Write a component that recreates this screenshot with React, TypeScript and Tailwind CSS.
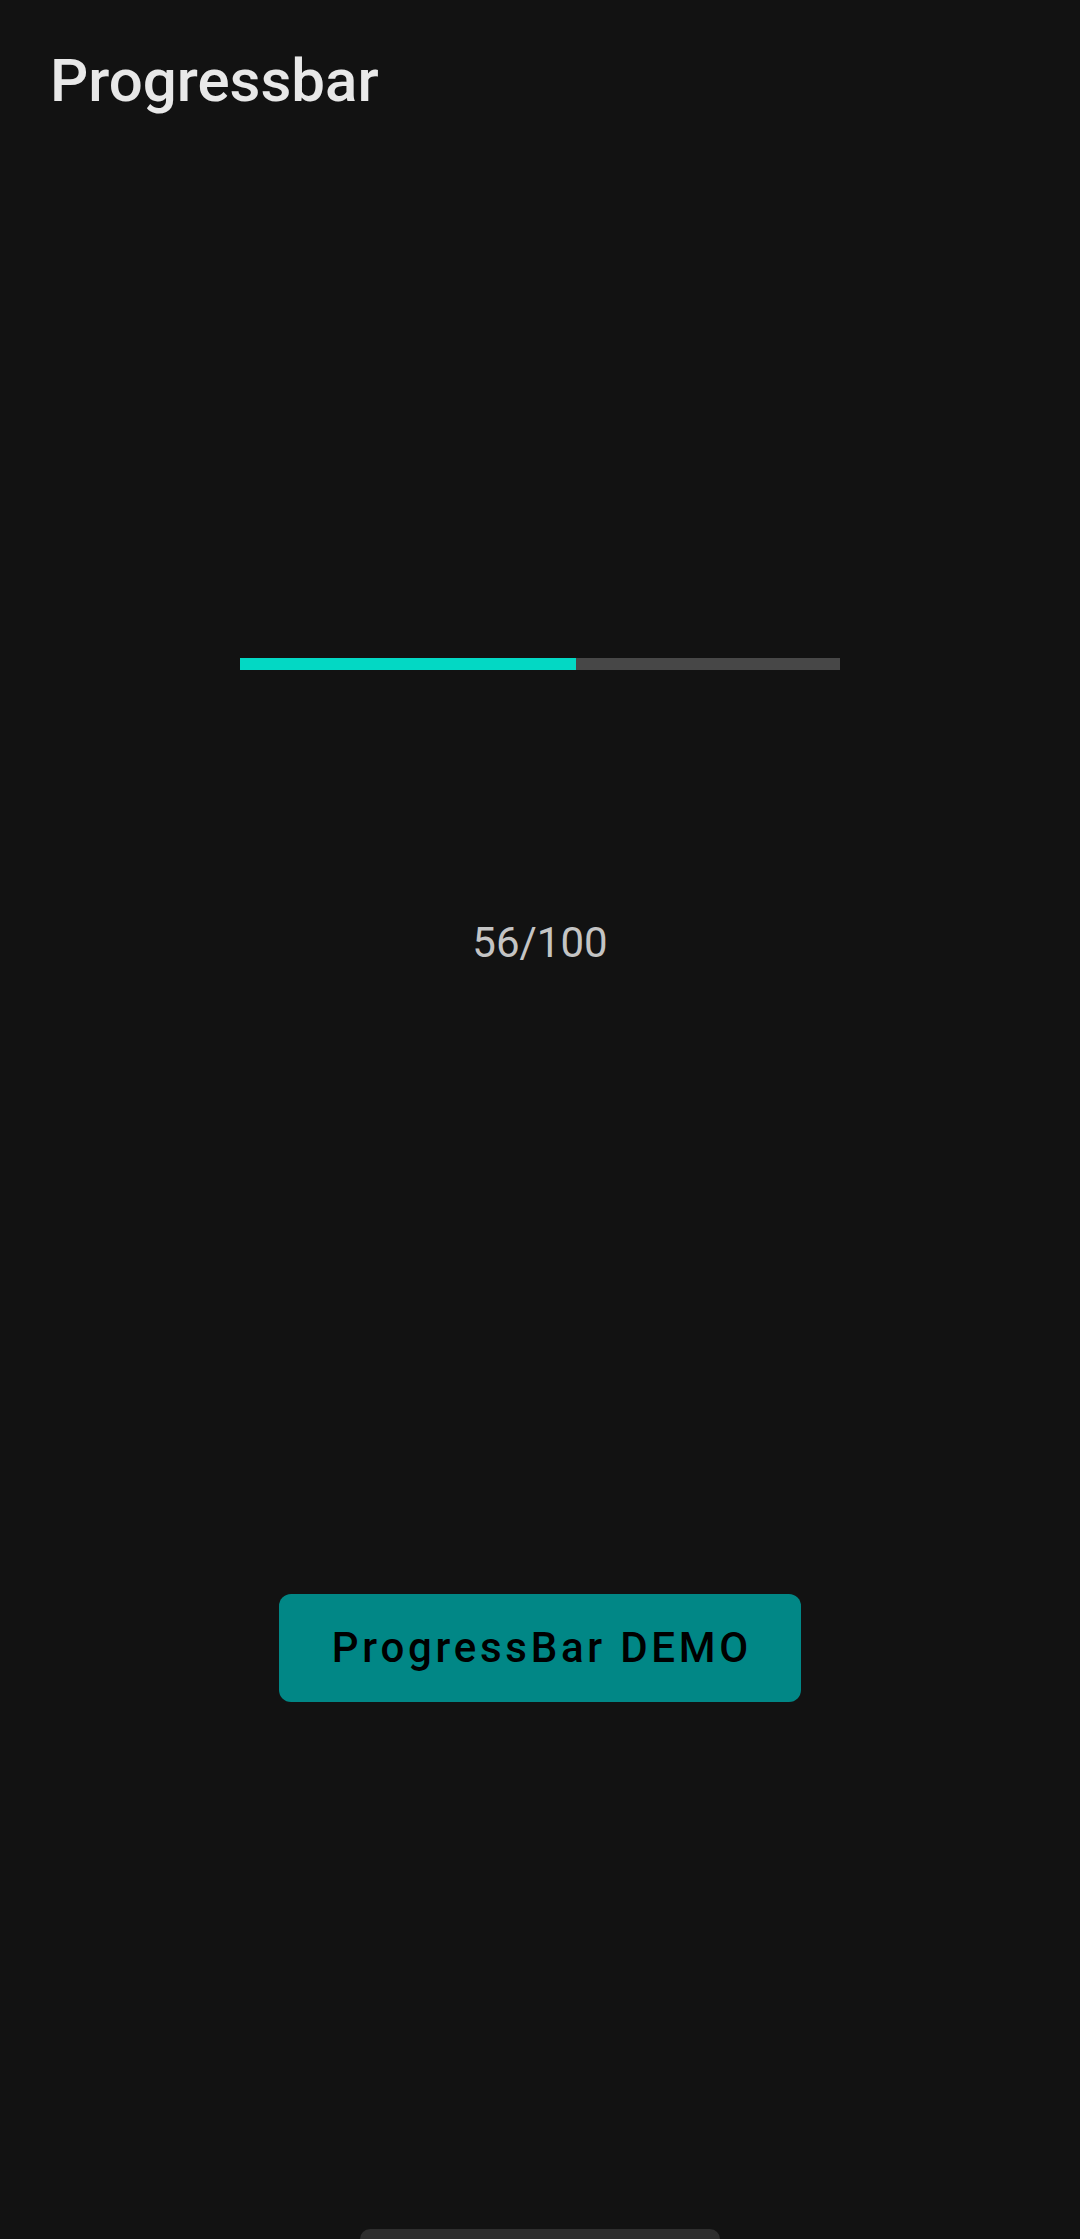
import { useState } from "react";

const MAX = 100;

export default function App() {
    const [progress, setProgress] = useState(56);

    const pct = (progress / MAX) * 100;

    return (
        <div className="flex min-h-[2239px] w-full flex-col items-center bg-[#121212] font-['Roboto',sans-serif]">
            {/* Toolbar title */}
            <div className="w-full pl-[50px] pt-[51px]">
                <h1 className="text-[60px] font-medium leading-none text-[#e8e8e8]">Progressbar</h1>
            </div>

            {/* Horizontal progress bar */}
            <div className="mt-[547px] h-[12px] w-[600px] bg-[#474747]">
                <div className="h-full bg-[#03d8c4]" style={{ width: `${pct}%` }} />
            </div>

            <p className="mt-[252px] text-[42px] leading-none text-[#c4c4c4]">
                {progress}/{MAX}
            </p>

            <button
                type="button"
                onClick={() => setProgress((p) => (p >= MAX ? 0 : p + 1))}
                className="mt-[630px] flex h-[108px] w-[522px] items-center justify-center rounded-[12px] bg-[#018786] text-[42px] font-medium leading-none tracking-[3.75px] text-black"
            >
                <span className="pl-[3.75px]">ProgressBar DEMO</span>
            </button>

            {/* Gesture nav handle */}
            <div className="mt-auto h-[10px] w-[360px] rounded-t-full bg-[#2e2e2e]" />
        </div>
    );
}
